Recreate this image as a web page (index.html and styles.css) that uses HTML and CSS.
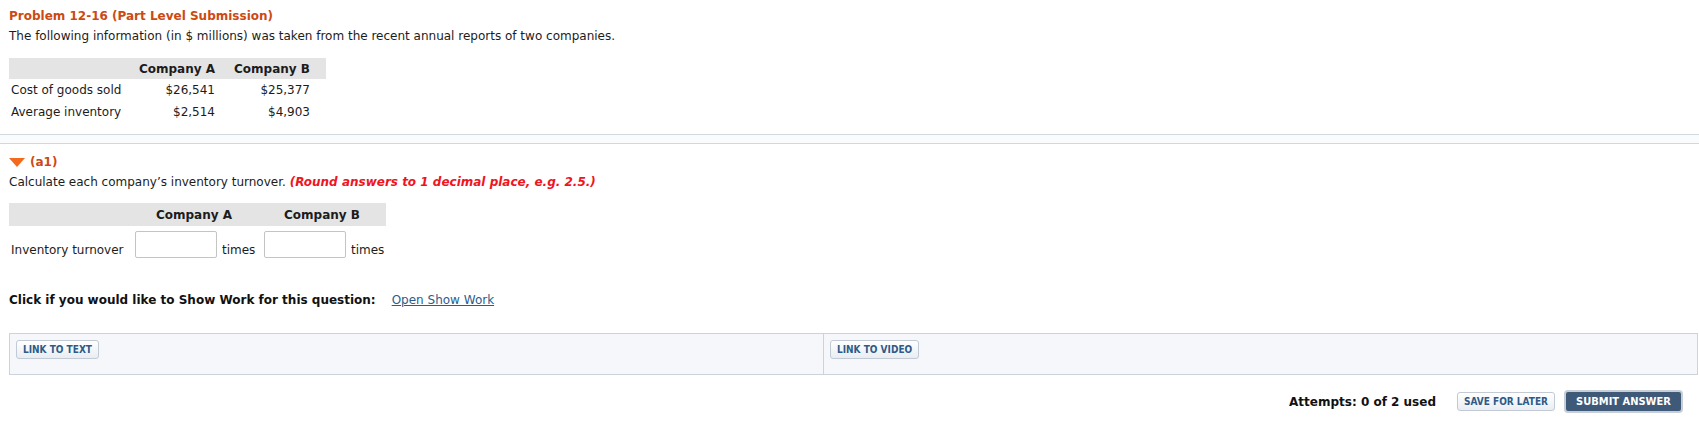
FILE: index.html
```html
<!DOCTYPE html>
<html lang="en">
<head>
<meta charset="utf-8">
<title>Problem 12-16</title>
<link rel="stylesheet" href="styles.css">
</head>
<body>
<div class="page">
  <section class="intro">
    <h1 class="title">Problem 12-16 (Part Level Submission)</h1>
    <p class="desc">The following information (in $ millions) was taken from the recent annual reports of two companies.</p>
    <div class="data-table">
      <div class="dt-row dt-head"><span></span><span class="num">Company A</span><span class="num numb">Company B</span></div>
      <div class="dt-row r1"><span class="lbl">Cost of goods sold</span><span class="num">$26,541</span><span class="num numb">$25,377</span></div>
      <div class="dt-row r2"><span class="lbl">Average inventory</span><span class="num">$2,514</span><span class="num numb">$4,903</span></div>
    </div>
  </section>

  <div class="divider"></div>

  <section class="part">
    <div class="part-head"><span class="tri"></span><span class="part-name">(a1)</span></div>
    <p class="instr">Calculate each company’s inventory turnover. <em class="note">(Round answers to 1 decimal place, e.g. 2.5.)</em></p>

    <div class="ans-table">
      <div class="ans-head"><span></span><span class="hc">Company A</span><span class="hc">Company B</span></div>
      <div class="ans-row">
        <span class="lbl">Inventory turnover</span>
        <span class="cell"><input class="box" type="text"><span class="unit">times</span></span>
        <span class="cell"><input class="box" type="text"><span class="unit">times</span></span>
      </div>
    </div>

    <p class="showwork"><b>Click if you would like to Show Work for this question:</b><a class="sw-link" href="#">Open Show Work</a></p>

    <div class="links">
      <div class="link-cell"><span class="btn-light">LINK TO TEXT</span></div>
      <div class="link-cell"><span class="btn-light">LINK TO VIDEO</span></div>
    </div>

    <div class="actions">
      <span class="attempts">Attempts: 0 of 2 used</span>
      <span class="btn-light save">SAVE FOR LATER</span>
      <span class="btn-submit">SUBMIT ANSWER</span>
    </div>
  </section>
</div>
</body>
</html>
```

FILE: styles.css
```css
* { box-sizing: border-box; }
html, body { margin: 0; padding: 0; background: #fff; }
body {
  font-family: "DejaVu Sans", sans-serif;
  font-size: 12px;
  line-height: 14px;
  color: #1c1c1c;
  width: 1699px;
  height: 426px;
  overflow: hidden;
}
.page { padding-top: 8px; }

.intro { padding-left: 9px; }
.title {
  margin: 0;
  font-size: 12px;
  line-height: 16px;
  font-weight: bold;
  color: #cc4a12;
}
.desc { margin: 4px 0 0; line-height: 17px; }

.data-table { margin-top: 13px; width: 317px; }
.dt-row {
  display: grid;
  grid-template-columns: 112px 100px 105px;
  align-items: center;
}
.dt-head { height: 21px; background: #e4e4e4; font-weight: bold; }
.r1 { height: 21px; padding-top: 1px; }
.r2 { height: 22px; padding-top: 1px; }
.lbl { padding-left: 2px; white-space: nowrap; }
.num { text-align: right; padding-right: 6px; }
.numb { padding-right: 16px; }

.divider {
  margin-top: 12px;
  height: 10px;
  border-top: 1px solid #cfd7e1;
  border-bottom: 1px solid #cfd7e1;
  background: #fafbfc;
}

.part { padding-left: 9px; padding-right: 1px; }
.part-head {
  display: flex;
  align-items: center;
  gap: 5px;
  margin-top: 10px;
  height: 16px;
}
.tri {
  width: 0; height: 0;
  border-left: 8px solid transparent;
  border-right: 8px solid transparent;
  border-top: 9px solid #f36a1e;
}
.part-name { font-weight: bold; color: #cc4a12; font-size: 12px; }
.instr { margin: 4px 0 0; line-height: 16px; }
.note { color: #ef1421; font-weight: bold; }

.ans-table { margin-top: 13px; width: 377px; }
.ans-head {
  display: grid;
  grid-template-columns: 121px 128px 128px;
  height: 23px;
  align-items: center;
  background: #e4e4e4;
  font-weight: bold;
}
.hc { text-align: center; }
.ans-row {
  display: grid;
  grid-template-columns: 121px 128px 128px;
  align-items: end;
  padding-top: 5px;
}
.ans-row .lbl { padding-bottom: 1px; }
.cell { display: flex; align-items: flex-end; gap: 5px; padding-left: 5px; }
.cell:last-child { padding-left: 6px; }
.box {
  width: 82px; height: 27px;
  border: 1px solid #c4c4c4;
  border-radius: 2px;
  background: #fff;
  margin: 0;
  padding: 0;
}
.unit { padding-bottom: 1px; }

.showwork { margin: 34px 0 0; display: flex; align-items: baseline; font-size: 12px; line-height: 16px; }
.showwork b { color: #111; }
.sw-link { margin-left: 16px; color: #2a5d8c; text-decoration: underline; font-size: 12px; }

.links {
  margin-top: 25px;
  display: grid;
  grid-template-columns: 813px 1fr;
  height: 42px;
  border: 1px solid #ccd3dd;
  background: #f5f7fa;
}
.link-cell { padding: 6px 0 0 6px; }
.link-cell + .link-cell { border-left: 1px solid #ccd3dd; }

.btn-light {
  display: inline-flex;
  align-items: center;
  justify-content: center;
  height: 19px;
  padding: 0 6px;
  border: 1px solid #c2cad5;
  border-radius: 3px;
  background: linear-gradient(#ffffff, #e9edf2);
  color: #2d5a88;
  font-family: "DejaVu Sans Condensed", "DejaVu Sans", sans-serif;
  font-weight: bold;
  font-size: 10px;
}

.actions {
  display: flex;
  justify-content: flex-end;
  align-items: center;
  padding-right: 15px;
  margin-top: 15px;
}
.attempts { font-weight: bold; font-size: 12px; color: #111; margin-right: 21px; }
.save { width: 98px; padding: 0; }
.btn-submit {
  margin-left: 9px;
  display: inline-flex;
  align-items: center;
  justify-content: center;
  width: 119px;
  height: 23px;
  border: 2px solid #c7ced7;
  border-radius: 4px;
  background: #3e5a78;
  color: #fff;
  font-family: "DejaVu Sans Condensed", "DejaVu Sans", sans-serif;
  font-weight: bold;
  font-size: 11px;
}
```
